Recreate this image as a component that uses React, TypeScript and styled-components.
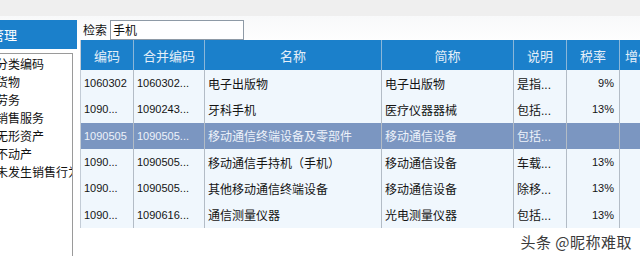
import React from 'react';
import styled, { createGlobalStyle } from 'styled-components';

const GlobalStyle = createGlobalStyle`
  html, body {
    margin: 0;
    padding: 0;
    background: #ffffff;
  }
  body {
    width: 640px;
    height: 256px;
    overflow: hidden;
    font-family: "Liberation Sans", "Noto Sans CJK SC", sans-serif;
  }
`;

interface RowData {
  code: string;
  merged: string;
  name: string;
  short: string;
  note: string;
  rate: string;
  selected?: boolean;
}

const rows: RowData[] = [
  { code: '1060302', merged: '1060302...', name: '电子出版物', short: '电子出版物', note: '是指...', rate: '9%' },
  { code: '1090...', merged: '1090243...', name: '牙科手机', short: '医疗仪器器械', note: '包括...', rate: '13%' },
  { code: '1090505', merged: '1090505...', name: '移动通信终端设备及零部件', short: '移动通信设备', note: '包括...', rate: '', selected: true },
  { code: '1090...', merged: '1090505...', name: '移动通信手持机（手机）', short: '移动通信设备', note: '车载...', rate: '13%' },
  { code: '1090...', merged: '1090505...', name: '其他移动通信终端设备', short: '移动通信设备', note: '除移...', rate: '13%' },
  { code: '1090...', merged: '1090616...', name: '通信测量仪器', short: '光电测量仪器', note: '包括...', rate: '13%' },
];

const treeItems = ['分类编码', '货物', '劳务', '销售服务', '无形资产', '不动产', '未发生销售行为的'];

const columns = [
  { title: '编码', width: 53 },
  { title: '合并编码', width: 71 },
  { title: '名称', width: 177 },
  { title: '简称', width: 132 },
  { title: '说明', width: 53 },
  { title: '税率', width: 53 },
  { title: '增值税特殊管理', width: 60 },
];

export default function App() {
  return (
    <>
      <GlobalStyle />
      <Window>
        <TopStrip />
        <Body>
          {/* 左侧分类树 */}
          <LeftPanel>
            <PanelHeader>
              <HeaderText>编码管理</HeaderText>
            </PanelHeader>
            <TreeBox>
              {treeItems.map((item) => (
                <TreeItem key={item}>{item}</TreeItem>
              ))}
            </TreeBox>
          </LeftPanel>

          {/* 右侧检索与表格 */}
          <MainPanel>
            <SearchRow>
              <SearchLabel>检索</SearchLabel>
              <SearchInput>手机</SearchInput>
            </SearchRow>
            <GridTable>
              <colgroup>
                {columns.map((c) => (
                  <col key={c.title} style={{ width: c.width }} />
                ))}
              </colgroup>
              <thead>
                <tr>
                  {columns.map((c, i) => (
                    <HeadCell key={c.title} $left={i === columns.length - 1}>
                      {c.title}
                    </HeadCell>
                  ))}
                </tr>
              </thead>
              <tbody>
                {rows.map((r, i) => (
                  <BodyRow key={i} $selected={!!r.selected}>
                    <Cell $num>{r.code}</Cell>
                    <Cell $num>{r.merged}</Cell>
                    <Cell>{r.name}</Cell>
                    <Cell>{r.short}</Cell>
                    <Cell>{r.note}</Cell>
                    <Cell $num $right>{r.rate}</Cell>
                    <Cell />
                  </BodyRow>
                ))}
              </tbody>
            </GridTable>
          </MainPanel>
        </Body>
        <Watermark>头条 @昵称难取</Watermark>
      </Window>
    </>
  );
}

const Window = styled.div`
  position: relative;
  width: 640px;
  height: 256px;
  overflow: hidden;
  display: flex;
  flex-direction: column;
  background: #ffffff;
`;

const TopStrip = styled.div`
  height: 16px;
  flex-shrink: 0;
  background: #efefef;
`;

const Body = styled.div`
  flex: 1;
  display: flex;
  background: linear-gradient(#f8f9fa, #ffffff 30px);
`;

const LeftPanel = styled.div`
  width: 77px;
  flex-shrink: 0;
  display: flex;
  flex-direction: column;
  padding-top: 4px;
`;

const PanelHeader = styled.div`
  height: 29px;
  background: #1b80cb;
  overflow: hidden;
  display: flex;
  align-items: center;
  justify-content: flex-end;
  padding-right: 60px;
`;

const HeaderText = styled.span`
  color: #ffffff;
  font-size: 13px;
  white-space: nowrap;
  font-family: "Noto Sans CJK SC", sans-serif;
`;

const TreeBox = styled.div`
  margin-top: 4px;
  width: 72px;
  flex: 1;
  background: #ffffff;
  border-top: 1px solid #9a9a9a;
  border-right: 1px solid #9a9a9a;
  overflow: hidden;
  padding-top: 1px;
`;

const TreeItem = styled.div`
  height: 18px;
  line-height: 18px;
  white-space: nowrap;
  margin-left: -4px;
  font-size: 12px;
  color: #111111;
  font-family: "Noto Sans CJK SC", sans-serif;
`;

const MainPanel = styled.div`
  flex: 1;
  display: flex;
  flex-direction: column;
  padding-left: 3px;
  padding-top: 3px;
  min-width: 0;
`;

const SearchRow = styled.div`
  height: 21px;
  display: flex;
  align-items: center;
  gap: 3px;
`;

const SearchLabel = styled.span`
  padding-left: 3px;
  font-size: 12px;
  color: #111111;
  font-family: "Noto Sans CJK SC", sans-serif;
`;

const SearchInput = styled.div`
  width: 130px;
  height: 18px;
  border: 1px solid #8e9aa6;
  background: #ffffff;
  font-size: 12px;
  color: #111111;
  line-height: 18px;
  padding-left: 2px;
  font-family: "Noto Sans CJK SC", sans-serif;
`;

const GridTable = styled.table`
  table-layout: fixed;
  border-collapse: collapse;
  width: 599px;
  background: #f0f7fd;
  border-left: 1px solid #c3ccd6;
`;

const HeadCell = styled.th<{ $left?: boolean }>`
  height: 30px;
  padding: 0 0 0 ${({ $left }) => ($left ? '5px' : '0')};
  background: #1b80cb;
  color: #e4eff9;
  font-weight: normal;
  font-size: 13px;
  text-align: ${({ $left }) => ($left ? 'left' : 'center')};
  border-right: 1px solid #8bb7d9;
  white-space: nowrap;
  overflow: hidden;
  font-family: "Noto Sans CJK SC", sans-serif;
`;

const BodyRow = styled.tr<{ $selected: boolean }>`
  height: 26.3px;
  background: ${({ $selected }) => ($selected ? '#7b96c1' : '#f0f7fd')};
  color: ${({ $selected }) => ($selected ? '#edf2fa' : '#141414')};
`;

const Cell = styled.td<{ $right?: boolean; $num?: boolean }>`
  padding: 0 ${({ $right }) => ($right ? '5px' : '3px')} 0 3px;
  font-size: ${({ $num }) => ($num ? '11px' : '12px')};
  text-align: ${({ $right }) => ($right ? 'right' : 'left')};
  border-right: 1px solid #b3bcc6;
  white-space: nowrap;
  overflow: hidden;
`;

// 水印
const Watermark = styled.div`
  position: absolute;
  right: 8px;
  bottom: 4px;
  font-size: 15px;
  color: #3a3a3a;
  letter-spacing: 0.5px;
  font-family: "Noto Sans CJK SC", sans-serif;
  text-shadow: 0 0 2px #ffffff;
`;
